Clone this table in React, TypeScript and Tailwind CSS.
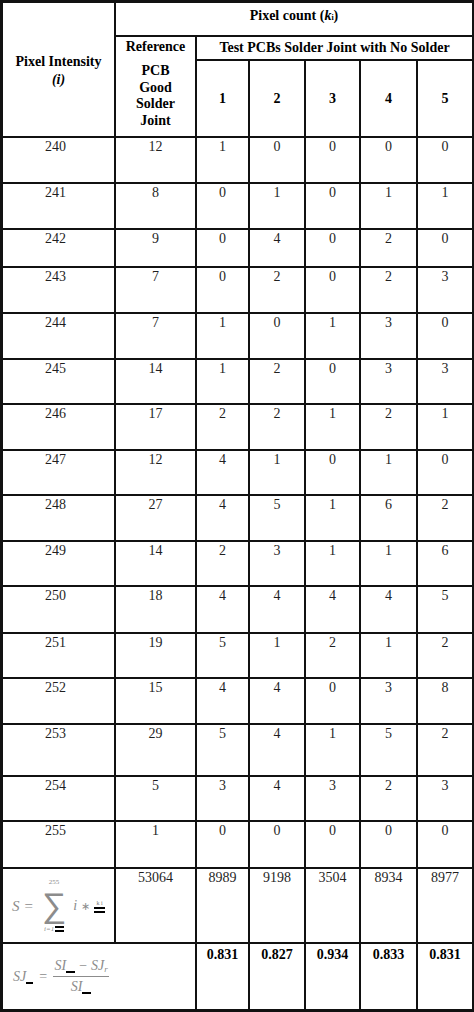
import React from "react"

const rows: [number, number, number[]][] = [
  [240, 12, [1, 0, 0, 0, 0]],
  [241, 8, [0, 1, 0, 1, 1]],
  [242, 9, [0, 4, 0, 2, 0]],
  [243, 7, [0, 2, 0, 2, 3]],
  [244, 7, [1, 0, 1, 3, 0]],
  [245, 14, [1, 2, 0, 3, 3]],
  [246, 17, [2, 2, 1, 2, 1]],
  [247, 12, [4, 1, 0, 1, 0]],
  [248, 27, [4, 5, 1, 6, 2]],
  [249, 14, [2, 3, 1, 1, 6]],
  [250, 18, [4, 4, 4, 4, 5]],
  [251, 19, [5, 1, 2, 1, 2]],
  [252, 15, [4, 4, 0, 3, 8]],
  [253, 29, [5, 4, 1, 5, 2]],
  [254, 5, [3, 4, 3, 2, 3]],
  [255, 1, [0, 0, 0, 0, 0]],
]

const sums = [8989, 9198, 3504, 8934, 8977]
const similarity = ["0.831", "0.827", "0.934", "0.833", "0.831"]

function Cell({ children, className = "" }: { children?: React.ReactNode; className?: string }) {
  return <div className={"bg-white text-center text-[14px] leading-4 text-[#1f1f1f] " + className}>{children}</div>
}

function Bar({ className = "" }: { className?: string }) {
  return <span className={"inline-block bg-black " + className} />
}

function SumFormula() {
  return (
    <div className="flex items-center h-full pl-[9px] text-[#8c8c8c] font-['Liberation_Serif',serif]">
      <span className="text-[15px] italic mr-[5px]">S</span>
      <span className="text-[15px]">=</span>
      <div className="flex flex-col items-center ml-[9px] mr-[7px]">
        <span className="text-[7px] leading-[8px]">255</span>
        <span className="text-[34px] leading-[38px] h-[38px] overflow-hidden font-['DejaVu_Sans',sans-serif] font-extralight">∑</span>
        <span className="flex items-center text-[7px] leading-[9px] italic mt-[1px]">
          i=1
          <span className="flex flex-col gap-[2px] ml-[1px]">
            <Bar className="w-[9px] h-[2px]" />
            <Bar className="w-[9px] h-[2px]" />
          </span>
        </span>
      </div>
      <span className="text-[14px] italic">i</span>
      <span className="text-[11px] mx-[4px]">∗</span>
      <span className="flex flex-col items-center mt-[1px]">
        <span className="text-[6px] leading-[6px] text-[#777]">k i</span>
        <Bar className="w-[11px] h-[2px] mt-[1px]" />
        <Bar className="w-[11px] h-[2px] mt-[2px]" />
      </span>
    </div>
  )
}

function SiFormula() {
  return (
    <div className="flex items-center h-full pl-[10px] italic text-[#8c8c8c] font-['Liberation_Serif',serif] text-[14px]">
      <span className="flex items-end leading-4">
        SJ
        <Bar className="w-[7px] h-[2px] mb-[1px]" />
      </span>
      <span className="not-italic mx-[6px]">=</span>
      <div className="flex flex-col items-center">
        <span className="flex items-end leading-4">
          SI
          <Bar className="w-[9px] h-[2px] mb-[1px]" />
          <span className="not-italic mx-[4px]">−</span>
          SJ
          <span className="text-[9px] leading-[10px]">r</span>
        </span>
        <span className="w-[56px] h-px bg-[#8c8c8c] my-[2px]" />
        <span className="flex items-end leading-4">
          SI
          <Bar className="w-[9px] h-[2px] mb-[1px]" />
        </span>
      </div>
    </div>
  )
}

export default function App() {
  return (
    <div className="w-[474px] h-[1012px] bg-white font-['Liberation_Serif',serif]">
      <div className="grid grid-cols-[111px_79px_51px_54px_53px_55px_54px] grid-rows-[32px_22px_75px_44px_44px_36px_44px_44px_43px_44px_43px_44px_43px_45px_43px_44px_50px_43px_45px_73px_65px] gap-[2px] bg-[#111] border-t-[3px] border-l-[3px] border-r-2 border-b-[3px] border-[#111]">
        {/* Header */}
        <Cell className="row-span-3 flex flex-col justify-center font-bold text-black pt-[2px]">
          <span className="leading-[18px]">Pixel Intensity</span>
          <span className="leading-[18px] italic">(i)</span>
        </Cell>
        <Cell className="col-span-6 font-bold text-black pt-[3px] leading-5">
          Pixel count (<span className="italic">k</span>
          <span className="text-[8px]">i</span>)
        </Cell>
        <Cell className="row-span-2 font-bold text-black pt-[2px]">
          <div className="leading-4">Reference</div>
          <div className="mt-[8px] leading-[16.5px]">
            PCB
            <br />
            Good
            <br />
            Solder
            <br />
            Joint
          </div>
        </Cell>
        <Cell className="col-span-5 font-bold text-black flex items-center justify-center">
          Test PCBs Solder Joint with No Solder
        </Cell>
        {[1, 2, 3, 4, 5].map((n) => (
          <Cell key={n} className="font-bold text-black flex items-center justify-center">
            {n}
          </Cell>
        ))}

        {/* Data rows */}
        {rows.map(([intensity, ref, tests]) => (
          <React.Fragment key={intensity}>
            <Cell className="pt-[1px] pr-[6px]">{intensity}</Cell>
            <Cell className="pt-[1px]">{ref}</Cell>
            {tests.map((v, i) => (
              <Cell key={i} className="pt-[1px]">
                {v}
              </Cell>
            ))}
          </React.Fragment>
        ))}

        {/* Sum row */}
        <Cell>
          <SumFormula />
        </Cell>
        <Cell className="pt-px">53064</Cell>
        {sums.map((v, i) => (
          <Cell key={i} className="pt-px">
            {v}
          </Cell>
        ))}

        {/* Similarity row */}
        <Cell className="col-span-2">
          <SiFormula />
        </Cell>
        {similarity.map((v, i) => (
          <Cell key={i} className="font-bold text-black pt-[3px]">
            {v}
          </Cell>
        ))}
      </div>
    </div>
  )
}
